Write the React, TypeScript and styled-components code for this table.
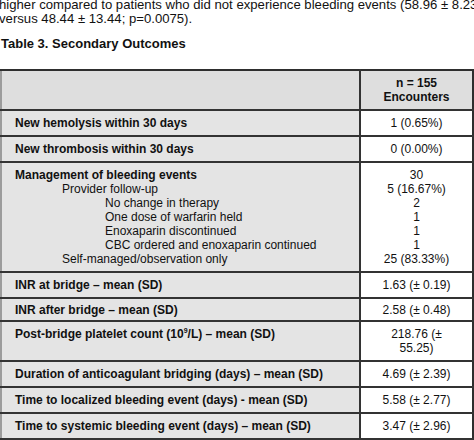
import styled, { createGlobalStyle } from "styled-components";

const GlobalStyle = createGlobalStyle`
    html, body {
        margin: 0;
        padding: 0;
        background: #ffffff;
    }
    body {
        font-family: "Liberation Sans", Arial, Helvetica, sans-serif;
        color: #111111;
        width: 474px;
        height: 440px;
        overflow: hidden;
    }
`;

const Page = styled.div`
    width: 474px;
`;

const Paragraph = styled.p`
    margin: -2px 0 0 -1px;
    font-size: 13.15px;
    line-height: 14px;
    white-space: nowrap;
`;

const Caption = styled.h3`
    margin: 10px 0 0 1px;
    font-size: 13px;
    line-height: 16px;
    font-weight: 700;
`;

const Table = styled.table`
    margin-top: 17px;
    width: 474px;
    border-collapse: collapse;
    table-layout: fixed;
    font-size: 12px;
    line-height: 14px;
    border-top: 2px solid #2e2e2e;
    border-right: 2px solid #2e2e2e;
    border-left: 2px solid #9c9c9c;
`;

const HeadCell = styled.th`
    background: #dedede;
    border-bottom: 2px solid #333333;
    border-left: 2px solid #333333;
    padding: 5px 4px;
    font-weight: 700;
    text-align: center;
    vertical-align: top;

    &:first-child {
        border-left: none;
    }
`;

const Row = styled.tr<{ $tight?: boolean }>`
    border-bottom: 2px solid #333333;

    & > td {
        padding-top: ${(p) => (p.$tight ? 4 : 5)}px;
        padding-bottom: ${(p) => (p.$tight ? 3 : 5)}px;
    }
`;

const LabelCell = styled.td`
    background: #e4e4e4;
    padding: 5px 4px 5px 13px;
    vertical-align: top;
    white-space: nowrap;
`;

const ValueCell = styled.td`
    background: #ffffff;
    border-left: 2px solid #333333;
    padding: 5px 4px;
    text-align: center;
    vertical-align: top;
`;

const Line = styled.div<{ $level?: number; $bold?: boolean }>`
    padding-left: ${(p) => (p.$level === 2 ? 90 : p.$level === 1 ? 47 : 0)}px;
    font-weight: ${(p) => (p.$bold ? 700 : 400)};
`;

const Sup = styled.sup`
    font-size: 7px;
    line-height: 0;
    vertical-align: 5px;
`;

const Cropped = styled.div`
    height: 10px;
    background: #c4c4c4;
`;

type Entry = { label: React.ReactNode; value: React.ReactNode; tight?: boolean };

const simpleRows: Entry[] = [
    { label: "New hemolysis within 30 days", value: "1 (0.65%)" },
    { label: "New thrombosis within 30 days", value: "0 (0.00%)" },
];

const laterRows: Entry[] = [
    { label: "INR at bridge – mean (SD)", value: "1.63 (± 0.19)" },
    { label: "INR after bridge – mean (SD)", value: "2.58 (± 0.48)", tight: true },
    {
        label: (
            <>
                Post-bridge platelet count (10<Sup>9</Sup>/L) – mean (SD)
            </>
        ),
        value: (
            <>
                218.76 (±
                <br />
                55.25)
            </>
        ),
    },
    { label: "Duration of anticoagulant bridging (days) – mean (SD)", value: "4.69 (± 2.39)" },
    { label: "Time to localized bleeding event (days) - mean (SD)", value: "5.58 (± 2.77)" },
    { label: "Time to systemic bleeding event (days) – mean (SD)", value: "3.47 (± 2.96)" },
];

const management = [
    { text: "Management of bleeding events", value: "30", level: 0 },
    { text: "Provider follow-up", value: "5 (16.67%)", level: 1 },
    { text: "No change in therapy", value: "2", level: 2 },
    { text: "One dose of warfarin held", value: "1", level: 2 },
    { text: "Enoxaparin discontinued", value: "1", level: 2 },
    { text: "CBC ordered and enoxaparin continued", value: "1", level: 2 },
    { text: "Self-managed/observation only", value: "25 (83.33%)", level: 1 },
];

export default function App() {
    return (
        <Page>
            <GlobalStyle />
            <Paragraph>
                higher compared to patients who did not experience bleeding events (58.96 ± 8.23
                <br />
                versus 48.44 ± 13.44; p=0.0075).
            </Paragraph>
            <Caption>Table 3. Secondary Outcomes</Caption>

            <Table>
                <colgroup>
                    <col style={{ width: 359 }} />
                    <col />
                </colgroup>
                <thead>
                    <tr>
                        <HeadCell />
                        <HeadCell>
                            n = 155
                            <br />
                            Encounters
                        </HeadCell>
                    </tr>
                </thead>
                <tbody>
                    {simpleRows.map((r, i) => (
                        <Row key={i}>
                            <LabelCell>
                                <Line $bold>{r.label}</Line>
                            </LabelCell>
                            <ValueCell>{r.value}</ValueCell>
                        </Row>
                    ))}
                    <Row>
                        <LabelCell>
                            {management.map((m, i) => (
                                <Line key={i} $level={m.level} $bold={m.level === 0}>
                                    {m.text}
                                </Line>
                            ))}
                        </LabelCell>
                        <ValueCell>
                            {management.map((m, i) => (
                                <div key={i}>{m.value}</div>
                            ))}
                        </ValueCell>
                    </Row>
                    {laterRows.map((r, i) => (
                        <Row key={i} $tight={r.tight}>
                            <LabelCell>
                                <Line $bold>{r.label}</Line>
                            </LabelCell>
                            <ValueCell>{r.value}</ValueCell>
                        </Row>
                    ))}
                </tbody>
            </Table>
            <Cropped />
        </Page>
    );
}
